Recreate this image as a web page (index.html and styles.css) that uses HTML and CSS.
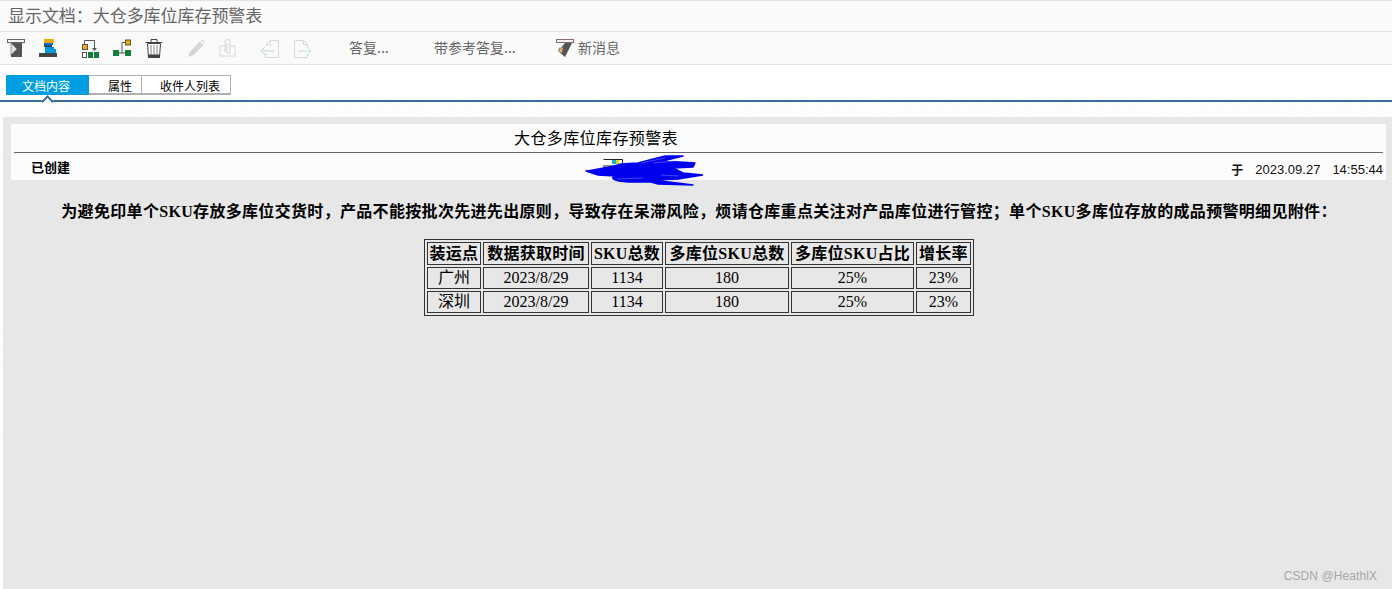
FILE: index.html
```html
<!DOCTYPE html>
<html lang="zh">
<head>
<meta charset="utf-8">
<title>显示文档</title>
<link rel="stylesheet" href="styles.css">
</head>
<body>
<header class="titlebar">显示文档：大仓多库位库存预警表</header>
<nav class="toolbar">
  <div class="group">
    <svg class="icon" viewBox="0 0 18 20"><path d="M4 4h11v15H4z" fill="#555"/><path d="M4 5l6 6-6 6z" fill="#e4e4e4" stroke="#777" stroke-width="0.800"/><rect x="0.500" y="1.500" width="17" height="3" fill="#f4f4f4" stroke="#666"/></svg>
    <svg class="icon" viewBox="0 0 18 20"><rect x="5" y="1" width="10" height="4" fill="#f0ab00"/><rect x="5" y="5" width="9" height="2" fill="#0a6ed1"/><rect x="5" y="7" width="8" height="2" fill="#2b4a6a"/><rect x="6" y="9" width="9" height="2" fill="#0a8fd8"/><rect x="6" y="11" width="11" height="4" fill="#009de0"/><rect x="0" y="15" width="18" height="4" fill="#444"/></svg>
  </div>
  <div class="group">
    <svg class="icon" viewBox="0 0 18 20"><rect x="1.500" y="6.500" width="5" height="5" fill="#f0ab00" stroke="#555"/><path d="M3.500 6V2.500h10V11" fill="none" stroke="#555"/><path d="M11 10h5l-2.500 3z" fill="#555"/><rect x="1.500" y="14.500" width="4" height="5" fill="#fff" stroke="#555"/><rect x="7" y="14" width="5" height="6" fill="#107e3e"/><rect x="13" y="14" width="5" height="6" fill="#107e3e"/></svg>
    <svg class="icon" viewBox="0 0 18 20"><rect x="12.500" y="2" width="5" height="5" fill="#f0ab00" stroke="#555"/><rect x="0" y="12" width="6" height="6" fill="#107e3e"/><rect x="12" y="12" width="6" height="6" fill="#107e3e"/><path d="M6 15h6M9 15V4.500h3" fill="none" stroke="#555"/></svg>
    <svg class="icon" viewBox="0 0 18 20"><path d="M0.500 4.500h17M6 4V1.500h6V4" fill="none" stroke="#444"/><path d="M2.500 5.500h13l-1 14h-11z" fill="#fff" stroke="#444"/><path d="M6 7v10M9 7v10M12 7v10" stroke="#888"/><rect x="3" y="16.500" width="12" height="3" fill="#444"/></svg>
  </div>
  <div class="group">
    <svg class="icon" viewBox="0 0 18 20"><path d="M1 19l1.500-5L13 3.500l3.500 3.500L6 17.500z" fill="#d6d6d6"/><path d="M14 2.500l1-1 3 3-1 1z" fill="#d6d6d6"/></svg>
    <svg class="icon" viewBox="0 0 18 20"><path d="M1 8v10h15V8h-4M6 8H1" fill="none" stroke="#d8d8d8"/><path d="M6 14V4a2.500 2.500 0 015 0v10a1.500 1.500 0 01-3 0V5" fill="none" stroke="#d8d8d8" stroke-width="1.200"/></svg>
  </div>
  <div class="group">
    <svg class="icon" viewBox="0 0 18 20"><path d="M4.500 7l5-4.500h8v17h-13V15" fill="none" stroke="#d8d8d8"/><path d="M4.500 7h5V2.500" fill="none" stroke="#d8d8d8"/><path d="M0 13h13M4 9l-4 4 4 4" fill="none" stroke="#b8e0c8"/></svg>
    <svg class="icon" viewBox="0 0 18 20"><path d="M1.500 2.500h9l4 4v3.500M14.500 16v3.500h-13v-17" fill="none" stroke="#d8d8d8"/><path d="M10.500 2.500v4h4" fill="none" stroke="#d8d8d8"/><path d="M5 13h13M14 9l4 4-4 4" fill="none" stroke="#b8e0c8"/></svg>
  </div>
  <span class="tool-text reply">答复...</span>
  <span class="tool-text refreply">带参考答复...</span>
  <span class="newmsg">
    <svg class="icon" viewBox="0 0 18 20"><path d="M6 5h10L9 19 2 13z" fill="#555"/><path d="M2 13l5-4-1 6z" fill="#e8b26a"/><path d="M3 5h6l-5 6z" fill="#f4f4f4"/><rect x="0.500" y="1.500" width="17" height="3" fill="#f4f4f4" stroke="#8a6a6a"/></svg>
    <span class="tool-text">新消息</span>
  </span>
</nav>
<div class="tabs">
  <div class="tab tab-active">文档内容<span class="caret"></span></div>
  <div class="tab tab-attrs">属性</div>
  <div class="tab tab-recips">收件人列表</div>
</div>
<div class="stage">
<main class="content">
  <section class="doc-head">
    <h1 class="doc-title">大仓多库位库存预警表</h1>
    <div class="doc-meta">
      <span class="created">已创建</span>
      <span class="stamp"><b class="at">于</b><span>2023.09.27</span><span class="time">14:55:44</span></span>
      <svg class="scribble" viewBox="0 0 120 34">
        <path d="M20.500 4.500h19v8h-19M20 11h10M20 13h7" stroke="#222" fill="none"/>
        <rect x="29" y="5" width="4" height="4" fill="#12b5c9"/>
        <rect x="33" y="5" width="3" height="4" fill="#e6d200"/>
        <path d="M3 16C15 14 30 12 38 9L55 8 82 1 100 1 80 6 112 8 110 12 90 13 100 18 120 20 95 24 70 25 110 30 75 29 68 27 45 27C30 26 27 23 32 21L15 20Z" fill="#0000f0" stroke="#0000f0" stroke-width="1.500" stroke-linejoin="round"/>
        <path d="M58 8L82 3M92 6L70 8M34 24L60 23M78 20L96 21" stroke="#8a8af5" stroke-width="0.500" fill="none"/>
      </svg>
    </div>
  </section>
  <p class="notice">为避免印单个SKU存放多库位交货时，产品不能按批次先进先出原则，导致存在呆滞风险，烦请仓库重点关注对产品库位进行管控；单个SKU多库位存放的成品预警明细见附件：</p>
  <table class="stock">
    <colgroup>
      <col class="c1"><col class="c2"><col class="c3"><col class="c4"><col class="c5"><col class="c6">
    </colgroup>
    <tr><th>装运点</th><th>数据获取时间</th><th>SKU总数</th><th>多库位SKU总数</th><th>多库位SKU占比</th><th>增长率</th></tr>
    <tr><td>广州</td><td>2023/8/29</td><td>1134</td><td>180</td><td>25%</td><td>23%</td></tr>
    <tr><td>深圳</td><td>2023/8/29</td><td>1134</td><td>180</td><td>25%</td><td>23%</td></tr>
  </table>
  <footer class="watermark">CSDN @HeathlX</footer>
</main>
</div>
</body>
</html>
```
FILE: styles.css
```css
* { box-sizing: border-box; }
html, body { height: 100%; }
body {
  margin: 0;
  height: 589px;
  overflow: hidden;
  display: flex;
  flex-direction: column;
  background: #fff;
  font-family: "Noto Sans CJK SC", "Liberation Sans", sans-serif;
  color: #000;
}
.titlebar {
  height: 32px;
  flex: none;
  padding-left: 8px;
  background: #fafafa;
  border-top: 1px solid #e2e2e2;
  border-bottom: 1px solid #e2e2e2;
  color: #666;
  font-size: 17px;
  line-height: 28px;
  letter-spacing: -0.05px;
}
.toolbar {
  height: 33px;
  flex: none;
  display: flex;
  align-items: center;
  padding-left: 7px;
  background: #fafafa;
  border-bottom: 1px solid #e2e2e2;
}
.group { display: flex; gap: 14px; margin-right: 24px; }
.icon { display: block; width: 18px; height: 20px; flex: none; }
.tool-text { color: #666; font-size: 14px; line-height: 20px; margin-bottom: 2px; }
.reply { margin-left: 14px; width: 85px; }
.refreply { width: 122px; }
.newmsg { display: flex; align-items: center; gap: 4px; }
.tabs {
  height: 37px;
  flex: none;
  display: flex;
  align-items: flex-start;
  padding: 10px 0 0 6px;
  border-bottom: 2px solid #346d9c;
  background: #fff;
}
.tab {
  position: relative;
  height: 20px;
  font-size: 12px;
  line-height: 20px;
  background: #fff;
  border: 1px solid #b0b0b0;
  border-bottom-width: 2px;
  border-left-width: 0;
}
.tab-active {
  width: 83px;
  padding-left: 16px;
  background: #009de0;
  color: #fff;
  border: 0;
  line-height: 22px;
}
.caret {
  position: absolute;
  left: 37px;
  top: 22px;
  width: 9px;
  height: 9px;
  background: #fff;
  border-top: 2px solid #346d9c;
  border-left: 2px solid #346d9c;
  transform: rotate(45deg);
}
.tab-attrs { width: 53px; padding-left: 19px; line-height: 20px; }
.tab-recips { width: 89px; padding-left: 18px; line-height: 20px; }
.stage {
  flex: 1;
  display: flex;
  min-height: 0;
  padding: 15px 0 0 3px;
  background: repeating-linear-gradient(135deg, #fff 0, #fff 2px, #f7f9fb 2px, #f7f9fb 3px);
}
.content {
  position: relative;
  flex: 1;
  padding: 7px 5px 0 8px;
  background: #e7e7e7;
  overflow: hidden;
}
.doc-head { background: #fcfcfc; height: 56px; margin-right: 1px; padding: 0 3px; }
.doc-title {
  margin: 0;
  height: 29px;
  padding-left: 500px;
  border-bottom: 1px solid #666;
  font-size: 16px;
  font-weight: 400;
  letter-spacing: 0.4px;
  line-height: 27px;
}
.doc-meta {
  position: relative;
  height: 27px;
  display: flex;
  justify-content: space-between;
  align-items: center;
  padding-left: 17px;
  font-size: 12px;
}
.created { font-weight: 700; font-size: 13px; }
.stamp { display: flex; align-items: center; padding-top: 5px; font-family: "Liberation Sans", sans-serif; color: #111; font-size: 13px; }
.at { font-family: "Noto Sans CJK SC", sans-serif; font-size: 12px; font-weight: 700; margin-right: 12px; }
.time { margin-left: 12px; }
.scribble { position: absolute; left: 569px; top: 2px; width: 120px; height: 34px; }
.notice {
  margin: 21px 0 0;
  text-align: center;
  font-family: "Liberation Serif", "Noto Sans CJK SC", serif;
  font-size: 16px;
  font-weight: 700;
  letter-spacing: 0.32px;
  line-height: 22px;
  white-space: nowrap;
}
.stock {
  margin: 16px auto 0;
  width: 550px;
  table-layout: fixed;
  border: 1px solid #333;
  border-spacing: 2px;
  border-collapse: separate;
  font-family: "Liberation Serif", "Noto Sans CJK SC", serif;
  font-size: 16px;
}
.stock th, .stock td {
  border: 1px solid #333;
  padding: 0;
  text-align: center;
  line-height: 20px;
  white-space: nowrap;
}
.stock th { height: 23px; letter-spacing: 0.25px; }
.stock td { height: 22px; }
.c1 { width: 54px; }
.c2 { width: 106px; }
.c3 { width: 72px; }
.c4 { width: 124px; }
.c5 { width: 123px; }
.c6 { width: 55px; }
.watermark {
  position: absolute;
  right: 15px;
  bottom: 6px;
  color: #a8a8a8;
  font-family: "Liberation Sans", sans-serif;
  font-size: 12px;
  letter-spacing: 0.08px;
}
```
